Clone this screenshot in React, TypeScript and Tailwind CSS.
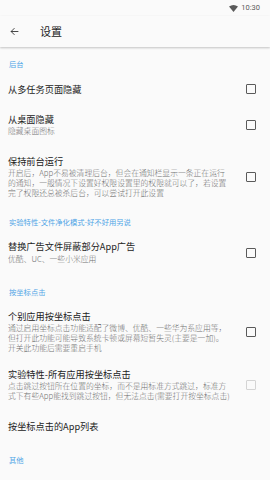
import React from "react";

const font = { fontFamily: '"Noto Sans CJK SC", "Noto Sans", Roboto, sans-serif' };

function Box({ disabled }: { disabled?: boolean }) {
  return (
    <div
      className={
        "w-[10px] h-[10px] rounded-[1px] border-[1.5px] shrink-0 " +
        (disabled ? "border-[#d4d4d4]" : "border-[#5a5a5a]")
      }
    />
  );
}

function Header({ text, cls }: { text: string; cls: string }) {
  return (
    <div className={"pl-[9px] text-[7.3px] leading-[10px] text-[#4fa5e6] " + cls}>{text}</div>
  );
}

const T = "text-[9.2px] leading-[11px] text-[#222]";
const D = "text-[7.8px] leading-[10px] font-light text-[#707070] whitespace-nowrap";

export default function App() {
  return (
    <div className="w-[270px] h-[480px] bg-[#fafafa] overflow-hidden" style={font}>
      {/* status bar */}
      <div className="h-[16px] flex items-center justify-end pr-[10px] gap-[3px] text-[#5a5a5a]">
        <svg width="9" height="7" viewBox="0 0 18 14">
          <path d="M9 14 L0 3 Q9 -3 18 3 Z" fill="#5a5a5a" />
        </svg>
        <span className="text-[7.5px] leading-none" style={{ fontFamily: "Roboto, sans-serif" }}>
          10:30
        </span>
      </div>
      {/* toolbar */}
      <div className="h-[31px] flex items-center shadow-[0_1px_2px_rgba(0,0,0,0.22)] relative">
        <svg className="ml-[10px]" width="9" height="9" viewBox="0 0 24 24" fill="none" stroke="#333" strokeWidth="2.4" strokeLinecap="square">
          <path d="M21 12H4M11 4l-8 8 8 8" />
        </svg>
        <span className="ml-[21px] text-[11px] leading-none text-[#222]">设置</span>
      </div>

      <Header text="后台" cls="pt-[12px] pb-[6px]" />

      <div className="flex items-center pl-[8px] pr-[14px] pt-[8px] pb-[8px]">
        <div className={"flex-1 leading-[12px] " + T}>从多任务页面隐藏</div>
        <Box />
      </div>

      <div className="flex items-center pl-[8px] pr-[14px] pt-[11px] pb-[9px]">
        <div className="flex-1">
          <div className={T}>从桌面隐藏</div>
          <div className={D + " mt-[1px]"}>隐藏桌面图标</div>
        </div>
        <Box />
      </div>

      <div className="flex items-center pl-[8px] pr-[14px] pt-[11px] pb-[9px]">
        <div className="flex-1">
          <div className={T}>保持前台运行</div>
          <div className={D + " mt-[1px]"}>
            <div>开启后，App不易被清理后台，但会在通知栏显示一条正在运行</div>
            <div>的通知，一般情况下设置好权限设置里的权限就可以了，若设置</div>
            <div>完了权限还总被杀后台，可以尝试打开此设置</div>
          </div>
        </div>
        <Box />
      </div>

      <Header text="实验特性-文件净化模式-好不好用另说" cls="pt-[10px] pb-[2px]" />

      <div className="flex items-center pl-[8px] pr-[14px] pt-[12px] pb-[10px]">
        <div className="flex-1">
          <div className={T}>替换广告文件屏蔽部分App广告</div>
          <div className={D + " mt-[2px]"}>优酷、UC、一些小米应用</div>
        </div>
        <Box />
      </div>

      <Header text="按坐标点击" cls="pt-[13px] pb-[2px]" />

      <div className="flex items-center pl-[8px] pr-[14px] pt-[12px] pb-[8px]">
        <div className="flex-1">
          <div className={T}>个别应用按坐标点击</div>
          <div className={D + " mt-[1px]"}>
            <div>通过启用坐标点击功能适配了微博、优酷、一些华为系应用等，</div>
            <div>但打开此功能可能导致系统卡顿或屏幕短暂失灵(主要是一加)。</div>
            <div>开关此功能后需要重启手机</div>
          </div>
        </div>
        <Box />
      </div>

      <div className="flex items-center pl-[8px] pr-[14px] pt-[8px] pb-[9px]">
        <div className="flex-1">
          <div className={T}>实验特性-所有应用按坐标点击</div>
          <div className={D + " mt-[1px]"}>
            <div>点击跳过按钮所在位置的坐标，而不是用标准方式跳过，标准方</div>
            <div>式下有些App能找到跳过按钮，但无法点击(需要打开按坐标点击)</div>
          </div>
        </div>
        <Box disabled />
      </div>

      <div className="pl-[8px] pt-[10px] pb-[12px]">
        <div className={"leading-[12px] " + T}>按坐标点击的App列表</div>
      </div>

      <Header text="其他" cls="pt-[11px]" />
    </div>
  );
}
